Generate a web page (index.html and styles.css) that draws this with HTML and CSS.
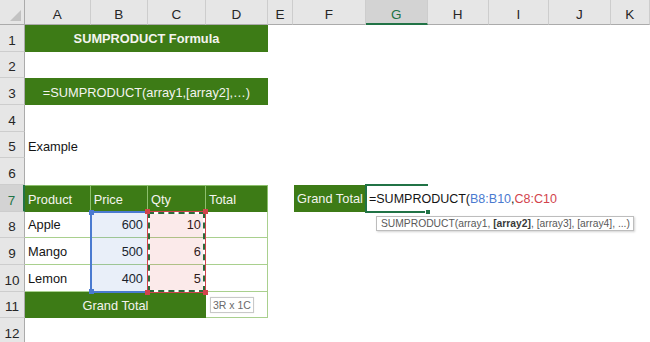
FILE: index.html
```html
<!DOCTYPE html>
<html>
<head>
<meta charset="utf-8">
<link rel="stylesheet" href="styles.css">
</head>
<body>
<div class="sheet">
  <div class="corner"><span class="tri"></span></div>
  <div class="ch c-A">A</div>
  <div class="ch c-B">B</div>
  <div class="ch c-C">C</div>
  <div class="ch c-D">D</div>
  <div class="ch c-E">E</div>
  <div class="ch c-F">F</div>
  <div class="ch c-G sel">G</div>
  <div class="ch c-H">H</div>
  <div class="ch c-I">I</div>
  <div class="ch c-J">J</div>
  <div class="ch c-K">K</div>

  <div class="rh r-1">1</div>
  <div class="rh r-2">2</div>
  <div class="rh r-3">3</div>
  <div class="rh r-4">4</div>
  <div class="rh r-5">5</div>
  <div class="rh r-6">6</div>
  <div class="rh r-7 sel">7</div>
  <div class="rh r-8">8</div>
  <div class="rh r-9">9</div>
  <div class="rh r-10">10</div>
  <div class="rh r-11">11</div>
  <div class="rh r-12">12</div>

  <div class="cell banner bold r-1 span-AD">SUMPRODUCT Formula</div>
  <div class="cell banner r-3 span-AD">=SUMPRODUCT(array1,[array2],…)</div>
  <div class="cell low r-5 c-A">Example</div>

  <div class="cell th r-7 c-A">Product</div>
  <div class="cell th r-7 c-B">Price</div>
  <div class="cell th r-7 c-C">Qty</div>
  <div class="cell th r-7 c-D">Total</div>

  <div class="cell label r-7 c-F">Grand Total</div>
  <div class="cell active r-7 c-G">
    <span class="formula">=SUMPRODUCT(<span class="ref-b">B8:B10</span>,<span class="ref-c">C8:C10</span></span>
    <span class="fill-handle"></span>
    <div class="tip">SUMPRODUCT(array1, <b>[array2]</b>, [array3], [array4], ...)</div>
  </div>

  <div class="cell td r-8 c-A">Apple</div>
  <div class="cell td num r-8 c-B">600</div>
  <div class="cell td num r-8 c-C">10</div>
  <div class="cell td r-8 c-D"></div>

  <div class="cell td r-9 c-A">Mango</div>
  <div class="cell td num r-9 c-B">500</div>
  <div class="cell td num r-9 c-C">6</div>
  <div class="cell td r-9 c-D"></div>

  <div class="cell td r-10 c-A">Lemon</div>
  <div class="cell td num r-10 c-B">400</div>
  <div class="cell td num r-10 c-C">5</div>
  <div class="cell td r-10 c-D"></div>

  <div class="cell total r-11 span-AC">Grand Total</div>
  <div class="cell td r-11 c-D"><span class="dim">3R x 1C</span></div>

  <div class="range range-b rows-8-10 c-B">
    <span class="h h-tl"></span>
    <span class="h h-bl"></span>
  </div>
  <div class="range range-c rows-8-10 c-C">
    <span class="ants"></span>
    <span class="h h-tl"></span>
    <span class="h h-tr"></span>
    <span class="h h-bl"></span>
    <span class="h h-br"></span>
  </div>
</div>
</body>
</html>
```
FILE: styles.css
```css
* { box-sizing: border-box; margin: 0; padding: 0; }
html, body { width: 650px; height: 342px; overflow: hidden; background: #fff; }
body { font-family: "Liberation Sans", Arial, sans-serif; font-size: 12.8px; color: #141414; }

.sheet {
  display: grid;
  grid-template-columns: 25px 65.7px 57.3px 58px 62px 25px 73px 61.7px 61px 60.3px 61.7px 1fr;
  grid-template-rows: 25px repeat(12, 26.67px);
}

/* placement */
.c-A { grid-column: 2; } .c-B { grid-column: 3; } .c-C { grid-column: 4; } .c-D { grid-column: 5; }
.c-E { grid-column: 6; } .c-F { grid-column: 7; } .c-G { grid-column: 8; } .c-H { grid-column: 9; }
.c-I { grid-column: 10; } .c-J { grid-column: 11; } .c-K { grid-column: 12; }
.ch { grid-row: 1; }
.r-1 { grid-row: 2; } .r-2 { grid-row: 3; } .r-3 { grid-row: 4; } .r-4 { grid-row: 5; }
.r-5 { grid-row: 6; } .r-6 { grid-row: 7; } .r-7 { grid-row: 8; } .r-8 { grid-row: 9; }
.r-9 { grid-row: 10; } .r-10 { grid-row: 11; } .r-11 { grid-row: 12; } .r-12 { grid-row: 13; }
.rh { grid-column: 1; }
.span-AD { grid-column: 2 / 6; }
.span-AC { grid-column: 2 / 5; }
.rows-8-10 { grid-row: 9 / 12; }

/* headers */
.corner {
  grid-column: 1; grid-row: 1;
  background: #e6e6e6;
  border-right: 1px solid #ababab;
  border-bottom: 1px solid #ababab;
  position: relative;
}
.tri {
  position: absolute; right: 3px; bottom: 3px;
  width: 0; height: 0;
  border-left: 11px solid transparent;
  border-bottom: 11px solid #c2c2c2;
}
.ch {
  background: #e6e6e6;
  border-right: 1px solid #cdcdcd;
  border-bottom: 1px solid #ababab;
  display: flex; align-items: center; justify-content: center;
  padding-top: 5px;
  font-size: 13.5px; color: #262626;
}
.ch.sel { background: #d3d3d3; color: #217346; border-bottom: 2px solid #217346; padding-top: 6px; }
.rh {
  background: #e6e6e6;
  border-bottom: 1px solid #cdcdcd;
  border-right: 1px solid #ababab;
  display: flex; align-items: center; justify-content: center;
  padding-top: 5px;
  font-size: 13.5px; color: #262626;
}
.rh.sel { background: #d3d3d3; color: #217346; border-right: 2px solid #217346; }

/* cells */
.cell {
  display: flex; align-items: center;
  padding: 1px 3px 0;
  white-space: nowrap;
  min-width: 0;
}
.low { padding-top: 3px; }
.banner { background: #3d7b16; color: #f4f4ef; justify-content: center; }
.bold { font-weight: bold; }
.th {
  background: #3d7b16; color: #f4f4ef;
  border-top: 1px solid #8cbf6c;
  border-right: 1px solid #8cbf6c;
}
.label { background: #3d7b16; color: #f4f4ef; margin: 0 0 0 1px; }
.td { border-right: 1px solid #a9d08e; border-bottom: 1px solid #a9d08e; }
.num { justify-content: flex-end; padding-right: 4px; }
.total { background: #3d7b16; color: #f4f4ef; justify-content: center; }
.dim {
  display: inline-block;
  font-size: 10.5px; color: #6a6a6a;
  border: 1px solid #c9c9c9;
  padding: 1px 2px;
  line-height: 12px;
  box-shadow: 0 0 1px rgba(0,0,0,0.12);
  margin-left: 1px;
}

/* active cell */
.active {
  position: relative;
  z-index: 3;
  margin: -1px 0 -1px -1px;
  border: 2px solid #217346;
  border-right: 0;
  padding: 1px 0 0 2px;
  overflow: visible;
}
.formula { color: #141414; font-size: 12.5px; }
.ref-b { color: #4a7ad0; }
.ref-c { color: #d2434c; }
.fill-handle {
  position: absolute; right: -3px; bottom: -4px;
  width: 6px; height: 6px;
  background: #217346; border: 1px solid #fff;
}
.tip {
  position: absolute; left: 9px; top: calc(100% + 5px);
  width: 258px; height: 15px;
  background: #fff;
  border: 1px solid #bdbdbd;
  box-shadow: 1px 1px 2px rgba(0,0,0,0.18);
  font-size: 10.3px; line-height: 13px; color: #595959;
  padding: 0 4px;
  white-space: nowrap;
}
.tip b { color: #3a3a3a; }

/* reference ranges */
.range { position: relative; z-index: 2; }
.range-b {
  margin: -1px 0 -1px -1px;
  border: 2px solid #4a7ad0;
  border-right: 0;
  background: rgba(74,122,208,0.12);
}
.range-c {
  margin: -1px 0 -1px -1px;
  border: 1px solid #d2434c;
  background: rgba(220,80,80,0.12);
  box-shadow: inset 0 0 0 2px #fff;
}
.ants {
  position: absolute; inset: 0;
  border: 2px dashed #2b6a3c;
}
.h { position: absolute; width: 5px; height: 5px; background: #d2434c; }
.range-b .h { background: #4a7ad0; }
.range-b .h-tl { left: -3px; top: -3px; }
.range-b .h-bl { left: -3px; bottom: -3px; }
.range-c .h-tl { left: -3px; top: -3px; }
.range-c .h-tr { right: -3px; top: -3px; }
.range-c .h-bl { left: -3px; bottom: -3px; }
.range-c .h-br { right: -3px; bottom: -3px; }
```
